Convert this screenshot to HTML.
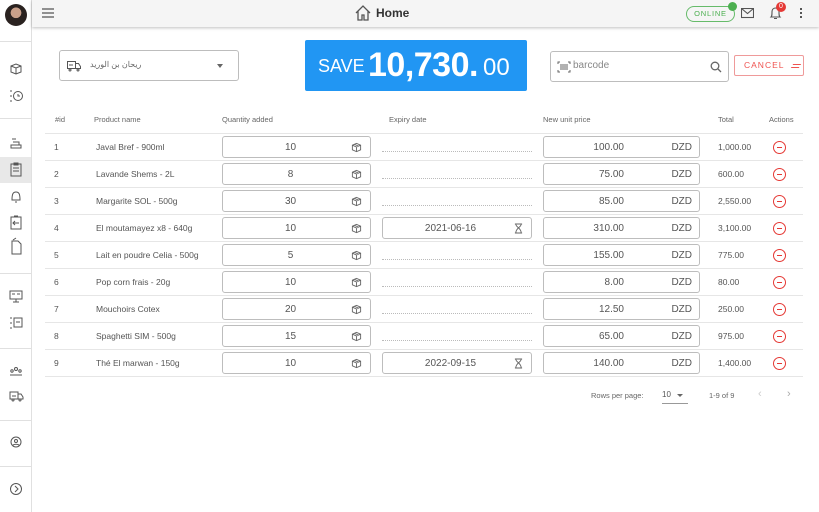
<!DOCTYPE html>
<html><head><meta charset="utf-8"><style>
*{box-sizing:border-box;margin:0;padding:0}
body{width:819px;height:512px;overflow:hidden;background:#fff;font-family:"Liberation Sans","Noto Sans CJK SC",sans-serif;color:#444;position:relative}
.a{position:absolute}
.side{left:0;top:0;width:32px;height:512px;border-right:1px solid #e0e0e0;background:#fff}
.sep{position:absolute;left:0;width:32px;height:1px;background:#e0e0e0}
.hdr{left:32px;top:0;width:787px;height:27px;background:#f5f5f5;box-shadow:0 1px 3px rgba(0,0,0,.25)}
.th{position:absolute;top:115px;font-size:7.5px;color:#666}
.row{position:absolute;left:45px;width:758px;height:27px;border-bottom:1px solid #e6e6e6;font-size:8.5px;color:#555}
.row span{position:absolute;top:8px}
.box{position:absolute;top:2px;height:22px;border:1px solid #bdbdbd;border-radius:3px;font-size:10px;color:#555}
.q{left:177px;width:149px}
.q b{font-weight:normal;position:absolute;left:0;width:135px;text-align:center;top:5px}
.dots{position:absolute;left:337px;width:150px;top:17px;border-top:1px dotted #bbb}
.e{left:337px;width:150px}
.e b{font-weight:normal;position:absolute;left:0;width:135px;text-align:center;top:5px}
.p{left:498px;width:157px}
.p b{font-weight:normal;position:absolute;right:75px;top:5px}
.p i{font-style:normal;position:absolute;right:7px;top:5px}
.row .t{left:673px}
.rm{position:absolute;left:728px;top:7px;width:13px;height:13px;border:1.5px solid #e53935;border-radius:50%}
.rm:after{content:"";position:absolute;left:2.5px;top:4.5px;width:5px;height:1.5px;background:#e53935}
</style></head><body>
<div class="a side">
 <div class="a" style="left:5px;top:4px;width:22px;height:22px;border-radius:50%;background:radial-gradient(circle at 50% 40%,#c9a08a 0 30%,#2a2220 32%)"></div>
 <div class="sep" style="top:41px"></div><div class="sep" style="top:118px"></div><div class="sep" style="top:273px"></div><div class="sep" style="top:348px"></div><div class="sep" style="top:420px"></div><div class="sep" style="top:466px"></div>
 <div class="a" style="left:0;top:157px;width:31px;height:26px;background:#e8e8e8"></div>
 <svg class="a" style="left:0;top:0" width="32" height="512" fill="none" stroke="#555" stroke-width="1">
  <path d="M11 66l5-2 5 2v6l-5 2-5-2zM11 66l5 2 5-2M16 68v6"/>
  <path d="M11 90v2M11 95v2M11 100v2"/><circle cx="18" cy="96" r="4.5"/><path d="M18 94v2h2"/>
  <path d="M11 145h10v3H11zM13 142h6v3M12 139h4"/>
  <rect x="11" y="164" width="10" height="12"/><path d="M14 163h4v2h-4zM13 168h6M13 171h6"/>
  <path d="M12 200c0-6 1-8 4-8s4 2 4 8h-8zM15 202h2"/>
  <rect x="11" y="217" width="10" height="12"/><path d="M14 216h4M19 223h-6M15 221l-2 2 2 2"/>
  <path d="M12 241h6l3 3v10H12zM13 240l3-2"/>
  <rect x="10" y="291" width="12" height="8"/><path d="M16 299v3M13 302h6M12 294h3M17 294h3"/>
  <path d="M11 317v2M11 322v2M11 327v2"/><rect x="14" y="318" width="8" height="9"/><path d="M16 322h4"/>
  <circle cx="16" cy="369" r="1.5"/><circle cx="12" cy="371" r="1.2"/><circle cx="20" cy="371" r="1.2"/><path d="M10 375h12"/>
  <rect x="10" y="392" width="8" height="7"/><path d="M18 394h3l2 3v2h-5M12 396h4"/><circle cx="13" cy="400" r="1"/><circle cx="20" cy="400" r="1"/>
  <circle cx="16" cy="442" r="5"/><circle cx="16" cy="441" r="1.5"/><path d="M13 445c2-1 4-1 6 0"/>
  <circle cx="16" cy="489" r="5.5"/><path d="M15 486l3 3-3 3"/>
 </svg>
</div>
<div class="a hdr">
 <svg class="a" style="left:10px;top:8px" width="12" height="10" stroke="#555" stroke-width="1.3"><path d="M0 1h12M0 5h12M0 9h12"/></svg>
 <svg class="a" style="left:323px;top:5px" width="16" height="16" fill="none" stroke="#555" stroke-width="1.3"><path d="M1 8L8 1l7 7M3 6v9h4v-5h2v5h4V6"/></svg>
 <div class="a" style="left:344px;top:6px;font-size:12px;font-weight:bold;color:#333">Home</div>
 <div class="a" style="left:654px;top:6px;width:49px;height:16px;border:1px solid #66bb6a;border-radius:8px;font-size:7.5px;color:#4caf50;text-align:center;line-height:14px;letter-spacing:.8px">ONLINE</div>
 <div class="a" style="left:696px;top:2px;width:9px;height:9px;border-radius:50%;background:#4caf50"></div>
 <svg class="a" style="left:709px;top:8px" width="13" height="11" fill="none" stroke="#555" stroke-width="1.1"><rect x=".5" y=".5" width="12" height="9"/><path d="M.5 .5l6 5 6-5"/></svg>
 <svg class="a" style="left:737px;top:6px" width="13" height="14" fill="none" stroke="#555" stroke-width="1.1"><path d="M2 11c1-1 1-2 1-5s2-4 3.5-4S10 3 10 6s0 4 1 5zM5 12.5h3"/></svg>
 <div class="a" style="left:744px;top:2px;width:10px;height:10px;border-radius:50%;background:#e53935;color:#fff;font-size:7px;text-align:center;line-height:10px">0</div>
 <div class="a" style="left:768px;top:8px;width:2px;height:2px;background:#555;box-shadow:0 4px #555,0 8px #555"></div>
</div>
<div class="a" style="left:59px;top:50px;width:180px;height:31px;border:1px solid #bdbdbd;border-radius:3px">
 <svg class="a" style="left:7px;top:10px" width="14" height="11" fill="none" stroke="#555" stroke-width="1"><rect x=".5" y=".5" width="8" height="7"/><path d="M8.5 2.5h3l2 3v2h-5M2 4h4"/><circle cx="3" cy="9" r="1"/><circle cx="11" cy="9" r="1"/></svg>
 <div class="a" style="left:30px;top:9px;font-size:8px;color:#666" dir="rtl">ريحان بن الوريد</div>
 <div class="a" style="left:157px;top:13px;border:3px solid transparent;border-top:4px solid #666"></div>
</div>
<div class="a" style="left:305px;top:40px;width:222px;height:51px;background:#2196f3;border-radius:2px;color:#fff">
 <div class="a" style="left:13px;top:16px;font-size:18px">SAVE</div>
 <div class="a" style="left:63px;top:6px;font-size:34px;font-weight:bold;letter-spacing:-0.5px">10,730.</div>
 <div class="a" style="left:178px;top:14px;font-size:24px">00</div>
</div>
<div class="a" style="left:550px;top:51px;width:179px;height:31px;border:1px solid #bdbdbd;border-radius:3px">
 <svg class="a" style="left:6px;top:9px" width="14" height="12" fill="none" stroke="#666" stroke-width="1"><path d="M1 3V1h2M11 1h2v2M1 9v2h2M11 11h2V9M4 3v6M6 3v6M8 3v6M10 3v6"/></svg>
 <div class="a" style="left:22px;top:8px;font-size:10px;color:#888">barcode</div>
 <svg class="a" style="left:159px;top:9px" width="12" height="12" fill="none" stroke="#666" stroke-width="1.3"><circle cx="5" cy="5" r="3.8"/><path d="M8 8l3 3"/></svg>
</div>
<div class="a" style="left:734px;top:55px;width:70px;height:21px;border:1px solid #ef9a9a;border-radius:2px;color:#ef5350;font-size:8.5px;letter-spacing:1px;line-height:19px;padding-left:9px">CANCEL <span style="display:inline-block;width:8px;height:4px;border-top:1.5px solid #ef5350;border-bottom:1.5px solid #ef5350;transform:skewX(-30deg);margin-left:4px;vertical-align:middle"></span></div>
<div class="th" style="left:55px">#id</div>
<div class="th" style="left:94px">Product name</div>
<div class="th" style="left:222px">Quantity added</div>
<div class="th" style="left:389px">Expiry date</div>
<div class="th" style="left:543px">New unit price</div>
<div class="th" style="left:718px">Total</div>
<div class="th" style="left:769px">Actions</div>
<div class="a" style="left:45px;top:133px;width:758px;height:1px;background:#e6e6e6"></div>
<svg width="0" height="0" style="position:absolute"><defs><symbol id="cb" viewBox="0 0 12 12"><path d="M1.5 3.5L6 1.5l4.5 2v5L6 10.5l-4.5-2zM1.5 3.5L6 5.5l4.5-2M6 5.5v5M3.7 2.5l4.5 2" fill="none" stroke="#666" stroke-width="1"/></symbol><symbol id="hg" viewBox="0 0 10 12"><path d="M1 1h8M1 11h8M2 1c0 4 6 4 6 10M8 1c0 4-6 4-6 10" fill="none" stroke="#666" stroke-width="1"/></symbol></defs></svg>

<div class="row" style="top:134px"><span style="left:9px">1</span><span style="left:51px">Javal Bref - 900ml</span><div class="box q"><b>10</b><svg class="a" style="left:128px;top:5px" width="11" height="11"><use href="#cb"/></svg></div><div class="dots"></div><div class="box p"><b>100.00</b><i>DZD</i></div><span class="t">1,000.00</span><div class="rm"></div></div>
<div class="row" style="top:161px"><span style="left:9px">2</span><span style="left:51px">Lavande Shems - 2L</span><div class="box q"><b>8</b><svg class="a" style="left:128px;top:5px" width="11" height="11"><use href="#cb"/></svg></div><div class="dots"></div><div class="box p"><b>75.00</b><i>DZD</i></div><span class="t">600.00</span><div class="rm"></div></div>
<div class="row" style="top:188px"><span style="left:9px">3</span><span style="left:51px">Margarite SOL - 500g</span><div class="box q"><b>30</b><svg class="a" style="left:128px;top:5px" width="11" height="11"><use href="#cb"/></svg></div><div class="dots"></div><div class="box p"><b>85.00</b><i>DZD</i></div><span class="t">2,550.00</span><div class="rm"></div></div>
<div class="row" style="top:215px"><span style="left:9px">4</span><span style="left:51px">El moutamayez x8 - 640g</span><div class="box q"><b>10</b><svg class="a" style="left:128px;top:5px" width="11" height="11"><use href="#cb"/></svg></div><div class="box e"><b>2021-06-16</b><svg class="a" style="left:131px;top:5px" width="9" height="11"><use href="#hg"/></svg></div><div class="box p"><b>310.00</b><i>DZD</i></div><span class="t">3,100.00</span><div class="rm"></div></div>
<div class="row" style="top:242px"><span style="left:9px">5</span><span style="left:51px">Lait en poudre Celia - 500g</span><div class="box q"><b>5</b><svg class="a" style="left:128px;top:5px" width="11" height="11"><use href="#cb"/></svg></div><div class="dots"></div><div class="box p"><b>155.00</b><i>DZD</i></div><span class="t">775.00</span><div class="rm"></div></div>
<div class="row" style="top:269px"><span style="left:9px">6</span><span style="left:51px">Pop corn frais - 20g</span><div class="box q"><b>10</b><svg class="a" style="left:128px;top:5px" width="11" height="11"><use href="#cb"/></svg></div><div class="dots"></div><div class="box p"><b>8.00</b><i>DZD</i></div><span class="t">80.00</span><div class="rm"></div></div>
<div class="row" style="top:296px"><span style="left:9px">7</span><span style="left:51px">Mouchoirs Cotex</span><div class="box q"><b>20</b><svg class="a" style="left:128px;top:5px" width="11" height="11"><use href="#cb"/></svg></div><div class="dots"></div><div class="box p"><b>12.50</b><i>DZD</i></div><span class="t">250.00</span><div class="rm"></div></div>
<div class="row" style="top:323px"><span style="left:9px">8</span><span style="left:51px">Spaghetti SIM - 500g</span><div class="box q"><b>15</b><svg class="a" style="left:128px;top:5px" width="11" height="11"><use href="#cb"/></svg></div><div class="dots"></div><div class="box p"><b>65.00</b><i>DZD</i></div><span class="t">975.00</span><div class="rm"></div></div>
<div class="row" style="top:350px"><span style="left:9px">9</span><span style="left:51px">Thé El marwan - 150g</span><div class="box q"><b>10</b><svg class="a" style="left:128px;top:5px" width="11" height="11"><use href="#cb"/></svg></div><div class="box e"><b>2022-09-15</b><svg class="a" style="left:131px;top:5px" width="9" height="11"><use href="#hg"/></svg></div><div class="box p"><b>140.00</b><i>DZD</i></div><span class="t">1,400.00</span><div class="rm"></div></div>

<div class="a" style="left:591px;top:391px;font-size:7.5px;color:#666">Rows per page:</div>
<div class="a" style="left:662px;top:390px;font-size:8px;color:#555">10</div>
<div class="a" style="left:677px;top:394px;border:3px solid transparent;border-top:3.5px solid #666"></div>
<div class="a" style="left:662px;top:403px;width:26px;height:1px;background:#999"></div>
<div class="a" style="left:709px;top:391px;font-size:7.5px;color:#666">1-9 of 9</div>
<div class="a" style="left:758px;top:388px;font-size:11px;color:#ccc">‹</div>
<div class="a" style="left:787px;top:388px;font-size:11px;color:#aaa">›</div>
</body></html>
